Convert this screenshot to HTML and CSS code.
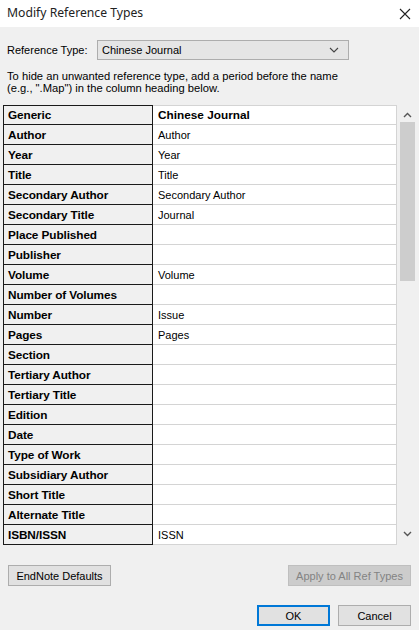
FILE: index.html
```html
<!DOCTYPE html>
<html>
<head>
<meta charset="utf-8">
<link rel="stylesheet" href="styles.css">
</head>
<body>
<div class="dialog">
  <div class="titlebar">
    <span class="title">Modify Reference Types</span>
    <svg class="close" width="12" height="12" viewBox="0 0 12 12"><path d="M1 1L11 11M11 1L1 11" stroke="#222" stroke-width="1.1" fill="none"/></svg>
  </div>
  <div class="content">
    <div class="typerow">
      <span class="label">Reference Type:</span>
      <div class="select">
        <span>Chinese Journal</span>
        <svg width="10" height="6" viewBox="0 0 10 6"><path d="M1 1L5 5L9 1" stroke="#444" stroke-width="1.1" fill="none"/></svg>
      </div>
    </div>
    <p class="hint">To hide an unwanted reference type, add a period before the name (e.g., ".Map") in the column heading below.</p>
    <div class="tablewrap">
      <div class="grid">
        <div class="row"><div class="key">Generic</div><div class="val bold">Chinese Journal</div></div>
        <div class="row"><div class="key">Author</div><div class="val">Author</div></div>
        <div class="row"><div class="key">Year</div><div class="val">Year</div></div>
        <div class="row"><div class="key">Title</div><div class="val">Title</div></div>
        <div class="row"><div class="key">Secondary Author</div><div class="val">Secondary Author</div></div>
        <div class="row"><div class="key">Secondary Title</div><div class="val">Journal</div></div>
        <div class="row"><div class="key">Place Published</div><div class="val"></div></div>
        <div class="row"><div class="key">Publisher</div><div class="val"></div></div>
        <div class="row"><div class="key">Volume</div><div class="val">Volume</div></div>
        <div class="row"><div class="key">Number of Volumes</div><div class="val"></div></div>
        <div class="row"><div class="key">Number</div><div class="val">Issue</div></div>
        <div class="row"><div class="key">Pages</div><div class="val">Pages</div></div>
        <div class="row"><div class="key">Section</div><div class="val"></div></div>
        <div class="row"><div class="key">Tertiary Author</div><div class="val"></div></div>
        <div class="row"><div class="key">Tertiary Title</div><div class="val"></div></div>
        <div class="row"><div class="key">Edition</div><div class="val"></div></div>
        <div class="row"><div class="key">Date</div><div class="val"></div></div>
        <div class="row"><div class="key">Type of Work</div><div class="val"></div></div>
        <div class="row"><div class="key">Subsidiary Author</div><div class="val"></div></div>
        <div class="row"><div class="key">Short Title</div><div class="val"></div></div>
        <div class="row"><div class="key">Alternate Title</div><div class="val"></div></div>
        <div class="row"><div class="key">ISBN/ISSN</div><div class="val">ISSN</div></div>
      </div>
      <div class="scrollbar">
        <svg class="arrow" width="9" height="6" viewBox="0 0 9 6"><path d="M1 5L4.5 1.5L8 5" stroke="#555" stroke-width="1.4" fill="none"/></svg>
        <div class="track"><div class="thumb"></div></div>
        <svg class="arrow" width="9" height="6" viewBox="0 0 9 6"><path d="M1 1L4.5 4.5L8 1" stroke="#555" stroke-width="1.4" fill="none"/></svg>
      </div>
    </div>
    <div class="btnrow">
      <button class="btn defaults">EndNote Defaults</button>
      <button class="btn apply" disabled>Apply to All Ref Types</button>
    </div>
    <div class="btnrow end">
      <button class="btn ok">OK</button>
      <button class="btn cancel">Cancel</button>
    </div>
  </div>
</div>
</body>
</html>
```

FILE: styles.css
```css
* { box-sizing: border-box; }
html, body { margin: 0; padding: 0; }
body {
  background: #f0f0f0;
  font-family: "Liberation Sans", Arial, sans-serif;
  font-size: 11px;
  color: #000;
  width: 419px;
  height: 630px;
  overflow: hidden;
}
.titlebar {
  height: 27px;
  background: #fff;
  display: flex;
  align-items: center;
  justify-content: space-between;
  padding: 0 6px 0 7px;
}
.title {
  font-family: "Noto Sans", "Liberation Sans", sans-serif;
  font-size: 12.2px;
  color: #222;
  padding-bottom: 2px;
}
.close { margin-right: 2px; }
.content { padding: 13px 0 0 0; }
.typerow {
  display: flex;
  align-items: center;
  padding-left: 7px;
  height: 20px;
}
.label { width: 90px; font-size: 11px; }
.select {
  width: 252px;
  height: 20px;
  background: #e5e5e5;
  border: 1px solid #adadad;
  display: flex;
  align-items: center;
  justify-content: space-between;
  padding: 0 9px 0 4px;
}
.hint {
  margin: 10px 0 0 7px;
  width: 340px;
  line-height: 12px;
  font-size: 11.2px;
}
.tablewrap {
  margin: 11px 2px 0 3px;
  display: flex;
  height: 440px;
}
.grid {
  width: 394px;
  background: #fff;
  border-right: 1px solid #d4d4d4;
}
.row {
  display: flex;
  height: 20px;
}
.key, .val {
  display: flex;
  align-items: center;
  line-height: 14px;
}
.key {
  width: 150px;
  background: #f0f0f0;
  border: 1px solid #1a1a1a;
  border-top: none;
  font-weight: bold;
  padding: 0 0 0 4px;
  font-size: 11.8px;
  letter-spacing: -0.1px;
}
.row:first-child .key { border-top: 1px solid #1a1a1a; }
.row:first-child .val { border-top: 1px solid #d4d4d4; }
.val {
  flex: 1;
  border-bottom: 1px solid #d4d4d4;
  padding: 0 0 0 5px;
  font-size: 11px;
}
.val.bold { font-weight: bold; font-size: 11.8px; }
.scrollbar {
  width: 20px;
  display: flex;
  flex-direction: column;
  align-items: center;
  padding: 0 2px 0 3px;
}
.arrow { margin: 7px 0 4px; flex: none; }
.scrollbar .arrow:last-child { margin: 4px 0 8px; }
.track { flex: 1; width: 100%; }
.thumb { height: 159px; background: #cdcdcd; }
.btnrow {
  display: flex;
  justify-content: space-between;
  padding: 0 8px 0 8px;
  margin-top: 20px;
}
.btnrow.end {
  justify-content: flex-end;
  gap: 8px;
  margin-top: 19px;
}
.btn {
  font-family: "Liberation Sans", Arial, sans-serif;
  font-size: 11px;
  height: 21px;
  background: #e1e1e1;
  border: 1px solid #adadad;
  color: #000;
  padding: 0;
}
.defaults { width: 103px; }
.apply { width: 123px; background: #cccccc; border-color: #bfbfbf; color: #838383; }
.ok { width: 73px; border: 2px solid #0078d7; }
.cancel { width: 73px; }
```
